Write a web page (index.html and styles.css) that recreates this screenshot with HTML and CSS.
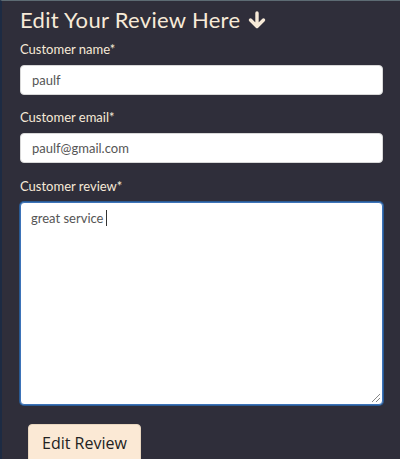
FILE: index.html
```html
<!DOCTYPE html>
<html lang="en">
<head>
<meta charset="utf-8">
<title>Edit Review</title>
<link rel="stylesheet" href="styles.css">
</head>
<body>
<main class="page">
  <h1 class="title">Edit Your Review Here
    <svg class="arrow" viewBox="0 0 20 20" aria-hidden="true"><path d="M10 3 V16 M3.5 10 L10 16.5 L16.5 10" fill="none" stroke="currentColor" stroke-width="3.4" stroke-linecap="round" stroke-linejoin="round"/></svg>
  </h1>
  <form class="form">
    <div class="field">
      <label class="label" for="name">Customer name*</label>
      <input class="input" id="name" type="text" value="paulf">
    </div>
    <div class="field">
      <label class="label" for="email">Customer email*</label>
      <input class="input" id="email" type="email" value="paulf@gmail.com">
    </div>
    <div class="field field-review">
      <label class="label" for="review">Customer review*</label>
      <div class="textarea">great service<span class="caret"></span></div>
    </div>
    <button class="btn" type="button">Edit Review</button>
  </form>
</main>
</body>
</html>
```
FILE: styles.css
```css
html, body {
  margin: 0;
  height: 100%;
}
body {
  background: #2f2e3a;
  border-top: 1px solid #5d6b73;
  border-left: 2px solid #1d2b43;
  box-sizing: border-box;
  overflow: hidden;
  font-family: Lato, "Open Sans", sans-serif;
  color: #f7ead8;
}
.page {
  padding: 0 17px 0 18px;
}
.title {
  margin: 0;
  padding-top: 4px;
  font-size: 22px;
  line-height: 29px;
  font-weight: 400;
  letter-spacing: 0.3px;
  display: flex;
  align-items: center;
  gap: 7px;
}
.arrow {
  width: 20px;
  height: 20px;
  color: #f7ead8;
}
.form {
  display: flex;
  flex-direction: column;
}
.field {
  display: flex;
  flex-direction: column;
  margin-top: 5px;
}
.field + .field {
  margin-top: 12px;
}
.field + .field-review {
  margin-top: 13px;
}
.label {
  font-size: 13px;
  line-height: 20px;
  margin-bottom: 6px;
}
.input {
  height: 30px;
  box-sizing: border-box;
  border: 1px solid #d8d8d8;
  border-radius: 4px;
  background: #fff;
  padding: 0 11px;
  font-family: inherit;
  font-size: 13px;
  color: #555;
  outline: none;
}
.textarea {
  height: 203px;
  box-sizing: border-box;
  border: 1px solid #3d73b8;
  box-shadow: 0 0 0 1px #2a5a92;
  border-radius: 4px;
  background: #fff;
  padding: 5px 10px;
  font-size: 13px;
  line-height: 20px;
  color: #555;
  position: relative;
}
.textarea::after {
  content: "";
  position: absolute;
  right: 2px;
  bottom: 2px;
  width: 8px;
  height: 8px;
  background: linear-gradient(135deg, transparent 45%, #888 45%, #888 55%, transparent 55%, transparent 70%, #888 70%, #888 80%, transparent 80%);
}
.caret {
  display: inline-block;
  width: 1px;
  height: 16px;
  background: #333;
  margin-left: 3px;
  vertical-align: -3px;
}
.btn {
  align-self: flex-start;
  margin: 19px 0 0 8px;
  height: 44px;
  padding: 0 13px 6px;
  border: 1px solid #e8d6bf;
  border-radius: 4px;
  background: #fbe9d5;
  font-family: "Open Sans", sans-serif;
  font-size: 16px;
  color: #222;
}
```
